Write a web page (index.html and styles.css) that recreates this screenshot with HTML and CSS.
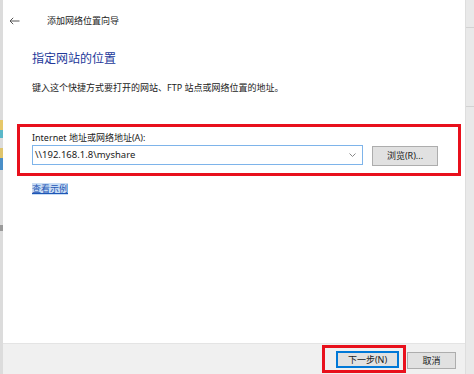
FILE: index.html
```html
<!DOCTYPE html>
<html lang="zh-CN">
<head>
    <meta charset="UTF-8">
    <meta name="viewport" content="width=device-width, initial-scale=1.0">
    <title>添加网络位置向导</title>
    <link rel="stylesheet" href="styles.css">
</head>
<body>
    <div class="edge-left">
        <span class="chip chip-yellow"></span>
        <span class="chip chip-teal"></span>
        <span class="chip chip-yellow2"></span>
        <span class="chip chip-blue"></span>
        <span class="chip chip-gray"></span>
    </div>
    <div class="dialog">
        <div class="content">
            <div class="header">
                <span class="back">
                    <svg width="11" height="8" viewBox="0 0 11 8">
                        <path d="M10.5 4H1M4.2 0.8L1 4l3.2 3.2" fill="none" stroke="#555" stroke-width="1"/>
                    </svg>
                </span>
                <span class="title">添加网络位置向导</span>
            </div>
            <h2 class="heading">指定网站的位置</h2>
            <p class="desc">键入这个快捷方式要打开的网站、FTP 站点或网络位置的地址。</p>

            <div class="mark-box">
                <label class="field-label">Internet 地址或网络地址(A):</label>
                <div class="field-row">
                    <div class="combo">
                        <span class="combo-text">\\192.168.1.8\myshare</span>
                        <svg class="chevron" width="7" height="4" viewBox="0 0 7 4">
                            <path d="M0.5 0.5L3.5 3.5L6.5 0.5" fill="none" stroke="#888" stroke-width="1"/>
                        </svg>
                    </div>
                    <button class="btn browse">浏览(R)...</button>
                </div>
            </div>

            <a class="example-link" href="#">查看示例</a>
        </div>
        <div class="footer">
            <span class="mark-btn">
                <button class="btn btn-default">下一步(N)</button>
            </span>
            <button class="btn cancel">取消</button>
        </div>
    </div>
    <div class="edge-right">
        <span class="tick tick-1"></span>
        <span class="tick tick-2"></span>
    </div>
</body>
</html>
```

FILE: styles.css
```css
body {
    margin: 0;
    padding: 0;
    width: 474px;
    height: 374px;
    display: flex;
    overflow: hidden;
    background: #fff;
    font-family: "Noto Sans", "Noto Sans CJK SC", sans-serif;
    color: #1a1a1a;
}

/* strips of the windows behind the dialog */
.edge-left {
    width: 3px;
    background: #dcdcdc;
    display: flex;
    flex-direction: column;
    padding-top: 120px;
}
.chip {
    display: block;
    width: 3px;
}
.chip-yellow { height: 10px; background: #e6c86a; }
.chip-teal { height: 8px; background: #5bb7c8; margin-bottom: 10px; }
.chip-yellow2 { height: 10px; background: #dfc46c; }
.chip-blue { height: 12px; background: #4a8fc8; margin-bottom: 55px; }
.chip-gray { height: 6px; background: #9a9a9a; }

.edge-right {
    width: 8px;
    background: #e9e9e9;
    border-left: 1px solid #dedede;
    display: flex;
    flex-direction: column;
}
.tick {
    display: block;
    height: 1px;
    background: #d2d2d2;
}
.tick-1 { margin-top: 27px; }
.tick-2 { margin-top: 78px; }

.dialog {
    flex: 1;
    display: flex;
    flex-direction: column;
}
.content {
    flex: 1;
    display: flex;
    flex-direction: column;
    align-items: flex-start;
}

.header {
    display: flex;
    align-items: center;
    height: 16px;
    margin-top: 13px;
}
.back {
    display: flex;
    margin-left: 6px;
    width: 12px;
}
.title {
    margin-left: 26px;
    font-size: 9px;
    line-height: 12px;
    color: #222;
}

.heading {
    margin: 22px 0 0 29px;
    font-size: 12px;
    line-height: 16px;
    font-weight: normal;
    color: #23399a;
}
.desc {
    margin: 15px 0 0 29px;
    font-size: 9px;
    line-height: 12px;
}

.mark-box {
    margin: 30px 0 0 14px;
    width: 422px;
    height: 40px;
    border: 3px solid #e8101c;
    padding: 5px 4px 1px 12px;
    box-sizing: content-box;
    display: flex;
    flex-direction: column;
}
.field-label {
    font-size: 9px;
    line-height: 12px;
    height: 13px;
}
.field-row {
    display: flex;
    align-items: flex-start;
    gap: 9px;
}
.combo {
    width: 331px;
    height: 20px;
    box-sizing: border-box;
    border: 1px solid #7eb4ea;
    display: flex;
    align-items: center;
    padding: 0 6px 0 2px;
}
.combo-text {
    flex: 1;
    font-size: 9.5px;
    line-height: 12px;
}
.chevron {
    display: block;
}

.btn {
    font-family: inherit;
    font-size: 9px;
    line-height: 12px;
    color: #1a1a1a;
    background: #e1e1e1;
    border: 1px solid #adadad;
    padding: 0;
    box-sizing: border-box;
}
.browse {
    width: 66px;
    height: 20px;
    margin-top: 1px;
}

.example-link {
    margin: 7px 0 0 29px;
    font-size: 9px;
    line-height: 12px;
    color: #1d56b6;
    background: #c9ddf4;
    text-decoration: underline;
}

.footer {
    height: 31px;
    background: #f0f0f0;
    border-top: 1px solid #e4e4e4;
    box-sizing: border-box;
    display: flex;
    justify-content: flex-end;
    align-items: flex-start;
    padding: 1px 9px 0 0;
}
.mark-btn {
    display: flex;
    border: 3px solid #e8101c;
    padding: 3px 4px 3px 11px;
    height: 28px;
    box-sizing: border-box;
}
.btn-default {
    width: 63px;
    height: 17px;
    border: 1px solid #0078d7;
    box-shadow: inset 0 0 0 1px #0078d7;
}
.cancel {
    width: 49px;
    height: 17px;
    margin: 7px 0 0 1px;
}
```
